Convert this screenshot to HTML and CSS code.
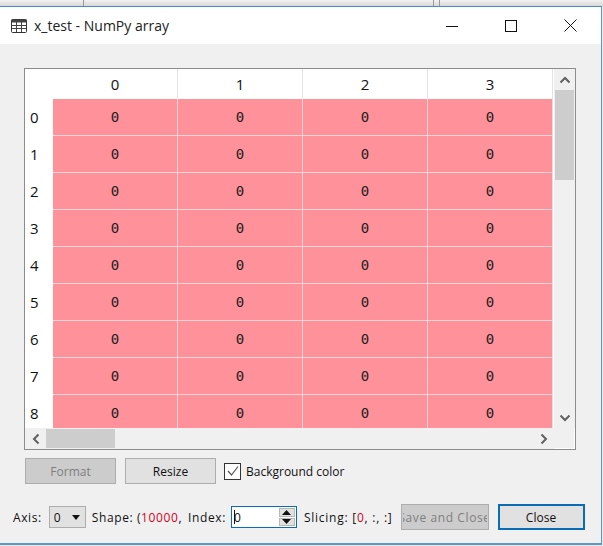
FILE: index.html
```html
<!DOCTYPE html>
<html lang="en">
<head>
<meta charset="utf-8">
<title>x_test - NumPy array</title>
<link rel="stylesheet" href="styles.css">
</head>
<body>
<div class="desk-top">
  <span class="tick tick-a"></span>
  <span class="tick tick-b"></span>
  <span class="tick tick-c"></span>
</div>
<div class="window">
  <header class="titlebar">
    <svg class="app-icon" width="16" height="14" viewBox="0 0 16 14">
      <rect x="0.5" y="0.5" width="15" height="13" rx="1" fill="#fff" stroke="#333"/>
      <rect x="0.5" y="0.5" width="15" height="3" fill="#444"/>
      <path d="M0.5 6.5H15.5M0.5 9.5H15.5M5.5 1V13M10.5 1V13" stroke="#444" fill="none"/>
    </svg>
    <span class="title">x_test - NumPy array</span>
    <span class="win-btn btn-min"><svg width="12" height="12" viewBox="0 0 12 12"><path d="M0 6.5H12" stroke="#111"/></svg></span>
    <span class="win-btn btn-max"><svg width="12" height="12" viewBox="0 0 12 12"><rect x="0.5" y="0.5" width="11" height="11" fill="none" stroke="#111"/></svg></span>
    <span class="win-btn btn-close"><svg width="13" height="13" viewBox="0 0 13 13"><path d="M0.5 0.5L12.5 12.5M12.5 0.5L0.5 12.5" stroke="#111"/></svg></span>
  </header>
  <main class="content">
    <section class="frame">
      <div class="table-area">
        <div class="table-view">
          <div class="corner"></div>
          <div class="col-head">0</div><div class="col-head">1</div><div class="col-head">2</div><div class="col-head">3</div>
          <div class="row-head">0</div><div class="cell">0</div><div class="cell">0</div><div class="cell">0</div><div class="cell">0</div>
          <div class="row-head">1</div><div class="cell">0</div><div class="cell">0</div><div class="cell">0</div><div class="cell">0</div>
          <div class="row-head">2</div><div class="cell">0</div><div class="cell">0</div><div class="cell">0</div><div class="cell">0</div>
          <div class="row-head">3</div><div class="cell">0</div><div class="cell">0</div><div class="cell">0</div><div class="cell">0</div>
          <div class="row-head">4</div><div class="cell">0</div><div class="cell">0</div><div class="cell">0</div><div class="cell">0</div>
          <div class="row-head">5</div><div class="cell">0</div><div class="cell">0</div><div class="cell">0</div><div class="cell">0</div>
          <div class="row-head">6</div><div class="cell">0</div><div class="cell">0</div><div class="cell">0</div><div class="cell">0</div>
          <div class="row-head">7</div><div class="cell">0</div><div class="cell">0</div><div class="cell">0</div><div class="cell">0</div>
          <div class="row-head">8</div><div class="cell">0</div><div class="cell">0</div><div class="cell">0</div><div class="cell">0</div>
        </div>
        <div class="hscroll">
          <span class="arrow"><svg width="10" height="12" viewBox="0 0 10 12"><path d="M7.5 1.5L3 6L7.5 10.5" fill="none" stroke="#606060" stroke-width="2"/></svg></span>
          <span class="hthumb"></span>
          <span class="track-fill"></span>
          <span class="arrow"><svg width="10" height="12" viewBox="0 0 10 12"><path d="M2.5 1.5L7 6L2.5 10.5" fill="none" stroke="#606060" stroke-width="2"/></svg></span>
        </div>
      </div>
      <div class="vscroll">
        <span class="arrow"><svg width="12" height="10" viewBox="0 0 12 10"><path d="M1.5 7.5L6 3L10.5 7.5" fill="none" stroke="#606060" stroke-width="2"/></svg></span>
        <span class="vthumb"></span>
        <span class="track-fill"></span>
        <span class="arrow"><svg width="12" height="10" viewBox="0 0 12 10"><path d="M1.5 2.5L6 7L10.5 2.5" fill="none" stroke="#606060" stroke-width="2"/></svg></span>
        <span class="scroll-corner"></span>
      </div>
    </section>

    <div class="row-format">
      <button class="btn btn-off btn-format" type="button">Format</button>
      <button class="btn btn-resize" type="button">Resize</button>
      <span class="check"><svg width="14" height="12" viewBox="0 0 14 12"><path d="M2 6L5.5 10L12 1.5" fill="none" stroke="#555" stroke-width="1.2"/></svg></span>
      <span class="label check-label">Background color</span>
    </div>

    <div class="row-axis">
      <span class="label wide">Axis:</span>
      <span class="combo"><span>0</span><svg width="8" height="5" viewBox="0 0 8 5"><path d="M0 0H8L4 5Z" fill="#111"/></svg></span>
      <span class="label wide shape">Shape: (<span class="red">10000</span>,</span>
      <span class="label wide index">Index:</span>
      <span class="spin">
        <span class="spin-text"><span class="caret"></span>0</span>
        <span class="spin-btns">
          <span class="spin-btn"><svg width="9" height="5" viewBox="0 0 9 5"><path d="M0 5L4.5 0L9 5Z" fill="#111"/></svg></span>
          <span class="spin-btn"><svg width="9" height="5" viewBox="0 0 9 5"><path d="M0 0L4.5 5L9 0Z" fill="#111"/></svg></span>
        </span>
      </span>
      <span class="label wide slicing">Slicing: [<span class="red">0</span>, :, :]</span>
      <button class="btn btn-off btn-save" type="button"><span class="clip"><span>Save and Close</span></span></button>
      <button class="btn btn-default" type="button">Close</button>
    </div>
  </main>
</div>
</body>
</html>
```

FILE: styles.css
```css
* { box-sizing: border-box; }

html, body {
  margin: 0;
  height: 546px;
  overflow: hidden;
}

body {
  background: #e9e9e9;
  font-family: "Open Sans", "Noto Sans", sans-serif;
  color: #111;
}

.desk-top {
  height: 6px;
  display: flex;
  background: linear-gradient(#f2f2f2, #d8d8d8);
}

.tick { width: 1px; height: 6px; background: #999; }
.tick-a { margin-left: 83px; }
.tick-b { margin-left: 349px; }
.tick-c { margin-left: 5px; }

.window {
  width: 602px;
  height: 539px;
  border-top: 1px solid #4a8cc4;
  border-right: 1px solid #5a98cc;
  border-bottom: 2px solid #5a98cc;
  background: #f0f0f0;
  display: flex;
  flex-direction: column;
}

.titlebar {
  height: 37px;
  flex: none;
  background: #fff;
  display: flex;
  align-items: center;
  padding-left: 11px;
}

.app-icon { flex: none; margin-top: 1px; }

.title {
  margin-left: 7px;
  font-size: 14px;
  color: #222;
  flex: 1;
}

.win-btn {
  width: 46px;
  height: 30px;
  display: flex;
  align-items: center;
  justify-content: center;
}

.btn-min { margin-right: 13px; }
.btn-max { margin-right: 13px; }
.btn-close { margin-right: 8px; }

.content {
  flex: 1;
  padding: 24px 0 0 24px;
}

.frame {
  width: 552px;
  height: 382px;
  border: 1px solid #8c8c8c;
  display: flex;
  background: #f0f0f0;
}

.table-area {
  width: 529px;
  display: flex;
  flex-direction: column;
}

.table-view {
  height: 359px;
  overflow: hidden;
  display: grid;
  grid-template-columns: 28px repeat(4, 125px);
  grid-template-rows: 30px repeat(9, 37px);
  background: #fff;
}

.col-head {
  background: #fff;
  border-right: 1px solid #e3e3e3;
  display: flex;
  align-items: center;
  justify-content: center;
  font-size: 15px;
  padding-bottom: 1px;
}

.row-head {
  background: #fff;
  font-size: 15px;
  padding: 0 0 1px 5px;
  display: flex;
  align-items: center;
}

.cell {
  background: #fe9199;
  border-right: 1px solid #f4d6d8;
  border-bottom: 1px solid #f4d6d8;
  display: flex;
  align-items: center;
  justify-content: center;
  font-family: "DejaVu Sans Mono", "Liberation Mono", monospace;
  font-size: 14px;
  color: #222;
}

.hscroll {
  height: 21px;
  display: flex;
  align-items: stretch;
}

.arrow {
  flex: none;
  display: flex;
  align-items: center;
  justify-content: center;
}

.hscroll .arrow { width: 21px; }

.hthumb {
  width: 69px;
  margin: 1px 0 1px;
  background: #cdcdcd;
}

.track-fill { flex: 1; }

.vscroll {
  width: 21px;
  display: flex;
  flex-direction: column;
  align-items: stretch;
  padding-left: 1px;
}

.vscroll .arrow { height: 21px; padding-right: 1px; }

.vthumb {
  height: 90px;
  margin-right: 1px;
  background: #cdcdcd;
}

.scroll-corner {
  height: 21px;
  margin-left: -1px;
  border-right: 1px solid #fff;
  border-bottom: 1px solid #fff;
}

.row-format {
  display: flex;
  align-items: center;
  height: 26px;
  margin: 8px 0 0 1px;
}

.btn {
  height: 26px;
  padding: 0;
  border: 1px solid #adadad;
  background: #e1e1e1;
  font-family: inherit;
  font-size: 12px;
  color: #111;
}

.btn-format { width: 91px; }
.btn-resize { width: 91px; margin-left: 9px; }

.btn-off {
  background: #cccccc;
  color: #7f7f7f;
}

.check {
  width: 17px;
  height: 17px;
  margin-left: 8px;
  border: 1px solid #333;
  background: #fff;
  display: flex;
  align-items: center;
  justify-content: center;
}

.label {
  font-size: 12px;
  white-space: nowrap;
  color: #111;
}

.wide { letter-spacing: 0.6px; }

.check-label { margin-left: 5px; }

.row-axis {
  display: flex;
  align-items: center;
  height: 26px;
  margin: 20px 0 0 -11px;
}

.combo {
  width: 37px;
  height: 22px;
  margin-left: 7px;
  padding: 0 5px 0 4px;
  border: 1px solid #adadad;
  background: #e1e1e1;
  font-size: 12px;
  display: flex;
  align-items: center;
  justify-content: space-between;
}

.shape { margin-left: 6px; }
.red { color: #d4001c; }
.index { margin-left: 6px; }

.spin {
  width: 66px;
  height: 22px;
  margin-left: 5px;
  border: 1px solid #0a6cb4;
  background: #fff;
  display: flex;
  align-items: stretch;
}

.spin-text {
  flex: 1;
  display: flex;
  align-items: center;
  font-size: 12px;
  padding-left: 2px;
}

.caret {
  width: 1px;
  height: 14px;
  margin-right: -1px;
  background: #111;
}

.spin-btns {
  width: 16px;
  display: flex;
  flex-direction: column;
  gap: 1px;
  margin: 1px 1px 1px 0;
}

.spin-btn {
  flex: 1;
  background: #e1e1e1;
  border: 1px solid #b8b8b8;
  display: flex;
  align-items: center;
  justify-content: center;
}

.slicing { margin-left: 7px; letter-spacing: 0.75px; }

.btn-save {
  width: 88px;
  margin-left: 8px;
  display: flex;
  align-items: center;
  justify-content: center;
  letter-spacing: 0.6px;
}

.clip {
  width: 84px;
  overflow: hidden;
  display: flex;
  justify-content: center;
  white-space: nowrap;
}

.btn-default {
  width: 87px;
  margin-left: 9px;
  border: 2px solid #0a6cb4;
}
```
